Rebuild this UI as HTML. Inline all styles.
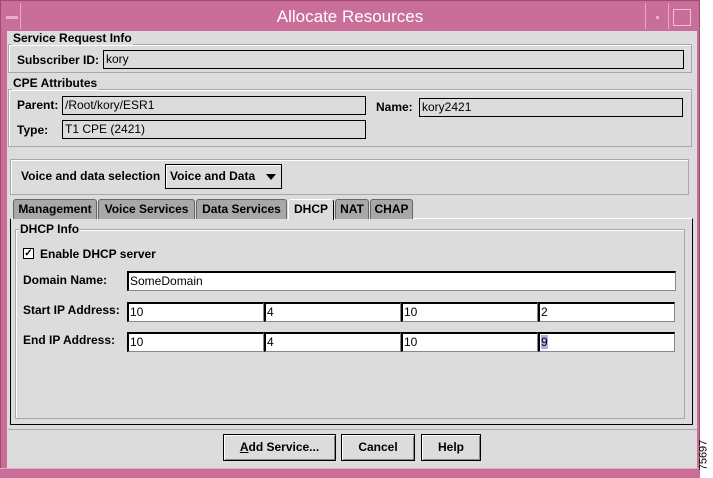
<!DOCTYPE html>
<html><head><style>
*{box-sizing:border-box;margin:0;padding:0}
body{width:713px;height:478px;background:#fff;position:relative;overflow:hidden;font-family:"Liberation Sans",sans-serif;font-size:12px;color:#000}
.a{position:absolute}
.frame{left:0;top:0;width:700px;height:478px;background:#c86e98;border:1px solid #a04a72}
.title{left:0;top:2px;width:700px;height:28px;line-height:30px;text-align:center;color:#fff;font-size:17px}
.content{left:7px;top:31px;width:690px;height:438px;background:#dcdcdc}
.grp{border:1px solid #a8a8a8;box-shadow:inset 1px 1px 0 #fff}
.lbl{background:#dcdcdc;font-weight:bold;font-size:12px;padding:0 1px;white-space:nowrap}
.fld{border:1px solid #000;background:#dcdcdc;font-size:12px;padding-left:2px;line-height:17px;white-space:nowrap}
.wf{background:#fff;border:1px solid #888;border-top:2px solid #000;border-left:2px solid #000;font-size:12px;padding-left:1px;line-height:16px}
.tab{top:199px;height:20px;border:1px solid #666;border-bottom:none;background:#a8a8a8;font-weight:bold;text-align:center;line-height:19px;border-radius:3px 3px 0 0}
.btn{top:434px;height:27px;border:1px solid #000;box-shadow:inset 1px 1px 0 #fff,inset -1px -1px 0 #888;background:#dcdcdc;font-weight:bold;text-align:center;line-height:25px}
</style></head><body>
<div class="a frame"></div>
<div class="a" style="left:3px;top:3px;width:18px;height:26px;border-right:1px solid #e8a8c4"></div>
<div class="a" style="left:6px;top:16px;width:12px;height:3px;background:#e8b0c8"></div>
<div class="a title">Allocate Resources</div>
<div class="a" style="left:645px;top:3px;width:24px;height:26px;border-left:1px solid #e8a8c4;border-right:1px solid #e8a8c4"></div>
<div class="a" style="left:656px;top:16px;width:3px;height:3px;background:#e8b0c8"></div>
<div class="a" style="left:673px;top:9px;width:18px;height:17px;border:1px solid #f0c0d4"></div>
<div class="a content"></div>

<div class="a grp" style="left:8px;top:44px;width:684px;height:29px"></div>
<div class="a lbl" style="left:12px;top:31px">Service Request Info</div>
<div class="a lbl" style="left:16px;top:53px">Subscriber ID:</div>
<div class="a fld" style="left:103px;top:50px;width:581px;height:19px">kory</div>

<div class="a grp" style="left:8px;top:89px;width:684px;height:58px"></div>
<div class="a lbl" style="left:12px;top:76px">CPE Attributes</div>
<div class="a lbl" style="left:16px;top:98px">Parent:</div>
<div class="a fld" style="left:62px;top:96px;width:304px;height:19px">/Root/kory/ESR1</div>
<div class="a lbl" style="left:375px;top:100px">Name:</div>
<div class="a fld" style="left:419px;top:98px;width:264px;height:19px">kory2421</div>
<div class="a lbl" style="left:16px;top:123px">Type:</div>
<div class="a fld" style="left:62px;top:120px;width:304px;height:19px">T1 CPE (2421)</div>

<div class="a grp" style="left:10px;top:159px;width:679px;height:36px"></div>
<div class="a lbl" style="left:20px;top:169px">Voice and data selection</div>
<div class="a" style="left:165px;top:164px;width:117px;height:25px;border:1px solid #000;box-shadow:inset 1px 1px 0 #fff;font-weight:bold;line-height:22px;padding-left:4px">Voice and Data<span style="position:absolute;left:100px;top:9px;border-left:5px solid transparent;border-right:5px solid transparent;border-top:6px solid #000"></span></div>

<div class="a" style="left:10px;top:218px;width:683px;height:207px;border:1px solid #000;border-top:1px solid #fff;background:#dcdcdc"></div>
<div class="a tab" style="left:13px;width:84px">Management</div>
<div class="a tab" style="left:98px;width:97px">Voice Services</div>
<div class="a tab" style="left:196px;width:91px">Data Services</div>
<div class="a tab" style="left:288px;width:46px;background:#dcdcdc;height:21px;border-color:#fff #000 #000 #fff">DHCP</div>
<div class="a tab" style="left:335px;width:34px">NAT</div>
<div class="a tab" style="left:370px;width:43px">CHAP</div>

<div class="a grp" style="left:15px;top:229px;width:670px;height:190px"></div>
<div class="a lbl" style="left:19px;top:222px">DHCP Info</div>
<div class="a" style="left:23px;top:248px;width:11px;height:11px;border:1px solid #000;background:#fff;font-size:10px;line-height:9px;text-align:center;font-weight:bold">✓</div>
<div class="a lbl" style="left:39px;top:247px">Enable DHCP server</div>
<div class="a lbl" style="left:22px;top:273px">Domain Name:</div>
<div class="a wf" style="left:127px;top:271px;width:549px;height:20px">SomeDomain</div>
<div class="a lbl" style="left:22px;top:303px">Start IP Address:</div>
<div class="a wf" style="left:127px;top:302px;width:137px;height:20px">10</div>
<div class="a wf" style="left:264px;top:302px;width:137px;height:20px">4</div>
<div class="a wf" style="left:401px;top:302px;width:137px;height:20px">10</div>
<div class="a wf" style="left:538px;top:302px;width:137px;height:20px">2</div>
<div class="a lbl" style="left:22px;top:333px">End IP Address:</div>
<div class="a wf" style="left:127px;top:332px;width:137px;height:20px">10</div>
<div class="a wf" style="left:264px;top:332px;width:137px;height:20px">4</div>
<div class="a wf" style="left:401px;top:332px;width:137px;height:20px">10</div>
<div class="a wf" style="left:538px;top:332px;width:137px;height:20px"><span style="background:#b0b0e8">9</span></div>

<div class="a" style="left:8px;top:429px;width:689px;height:1px;background:#a8a8a8"></div>
<div class="a btn" style="left:223px;width:113px"><u>A</u>dd Service...</div>
<div class="a btn" style="left:341px;width:74px">Cancel</div>
<div class="a btn" style="left:421px;width:60px">Help</div>

<div class="a" style="left:0;top:468px;width:700px;height:10px;background:#c86e98;border-top:1px solid #e8a8c4"></div>
<div class="a" style="left:688px;top:449px;transform:rotate(-90deg);font-size:11px;color:#000;white-space:nowrap;transform-origin:center">75697</div>
</body></html>
